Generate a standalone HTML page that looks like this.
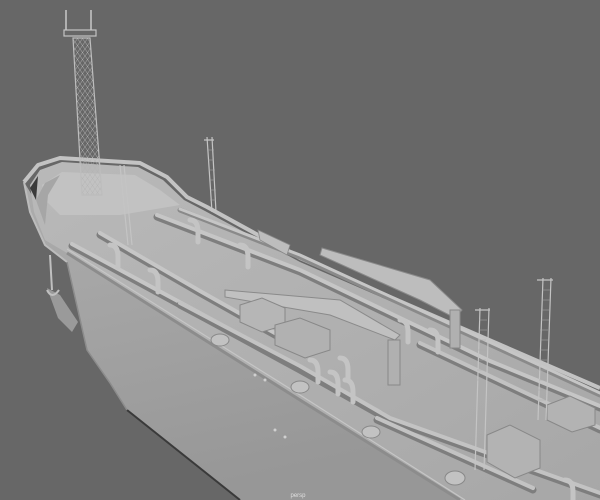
<!DOCTYPE html>
<html><head><style>
html,body{margin:0;padding:0;background:#676767;width:600px;height:500px;overflow:hidden}
svg{display:block}
</style></head><body>
<svg width="600" height="500" viewBox="0 0 600 500" xmlns="http://www.w3.org/2000/svg">
<defs>
<linearGradient id="hull" x1="0" y1="0" x2="0.3" y2="1">
<stop offset="0" stop-color="#adadad"/><stop offset="1" stop-color="#979797"/>
</linearGradient>
<linearGradient id="deck" x1="0" y1="0" x2="1" y2="1">
<stop offset="0" stop-color="#b9b9b9"/><stop offset="1" stop-color="#a7a7a7"/>
</linearGradient>
<pattern id="lat" width="5" height="7" patternUnits="userSpaceOnUse">
<path d="M0 0L5 7M5 0L0 7" stroke="#b4b4b4" stroke-width="0.5"/>
</pattern>
</defs>
<rect width="600" height="500" fill="#676767"/>
<!-- bulb -->
<path d="M47 288 L60 295 L78 322 L72 332 L58 318 Z" fill="#9a9a9a"/>
<!-- hull -->
<path d="M24 182 L30 212 L45 245 L67 262 L87 350 L110 383 L127 410 L240 500 L460 500 L300 400 L67 253 Z" fill="url(#hull)"/>
<path d="M24 182 L30 212 L45 245 L67 262" fill="none" stroke="#bcbcbc" stroke-width="2"/>
<path d="M127 410 L240 500" stroke="#3a3a3a" stroke-width="2"/>
<path d="M67 262 L87 350 L110 383 L127 410" stroke="#8c8c8c" stroke-width="1.5" fill="none"/>
<!-- deck -->
<path d="M30 185 L40 170 L62 162 L138 167 L163 180 L184 200 L205 211 L300 262 L600 392 L600 500 L460 500 L300 400 L67 253 L45 240 L34 212 Z" fill="url(#deck)"/>
<!-- bow inner area lighter -->
<path d="M42 185 L62 172 L135 175 L160 190 L180 205 L120 215 L60 215 L45 200 Z" fill="#c2c2c2"/>
<path d="M36 200 L45 183 L60 175 L48 195 L45 225 Z" fill="#a6a6a6"/>
<path d="M30 188 L38 176 L36 200 Z" fill="#3a3a3a"/>
<!-- rim -->
<path d="M24 182 L38 165 L60 158 L140 163 L167 177 L187 197 L207 207 L300 258 L600 388" fill="none" stroke="#c3c3c3" stroke-width="4" stroke-linejoin="round"/>
<path d="M67 253 L300 400 L460 500" stroke="#8c8c8c" stroke-width="3" fill="none"/>
<path d="M67 249 L300 395 L465 500" stroke="#c6c6c6" stroke-width="1.2" fill="none"/>
<!-- pipes -->
<g stroke-linecap="round" fill="none">
<path d="M72 246 L300 370 L380 415" stroke="#7e7e7e" stroke-width="7"/>
<path d="M72 244 L300 367 L380 412" stroke="#c6c6c6" stroke-width="4"/>
<path d="M100 235 L200 293 L305 352" stroke="#7e7e7e" stroke-width="7"/>
<path d="M100 233 L200 291 L305 350" stroke="#c6c6c6" stroke-width="4"/>
<path d="M180 305 L300 368 L390 420 L600 495" stroke="#7e7e7e" stroke-width="7"/>
<path d="M180 303 L300 366 L390 418 L600 493" stroke="#c3c3c3" stroke-width="4"/>
<path d="M377 420 L533 490" stroke="#7e7e7e" stroke-width="7"/>
<path d="M377 418 L533 488" stroke="#c3c3c3" stroke-width="4"/>
<path d="M157 217 L300 272 L490 363 L600 408" stroke="#7e7e7e" stroke-width="7"/>
<path d="M157 215 L300 270 L490 361 L600 406" stroke="#c6c6c6" stroke-width="4"/>
<path d="M180 210 L300 257 L600 395" stroke="#8a8a8a" stroke-width="5"/>
<path d="M180 209 L300 255 L600 393" stroke="#c6c6c6" stroke-width="3"/>
<path d="M420 345 L600 430" stroke="#7e7e7e" stroke-width="7"/>
<path d="M420 343 L600 428" stroke="#c2c2c2" stroke-width="4"/>
<path d="M110 245 q8 0 8 12 v10" stroke="#c4c4c4" stroke-width="5"/>
<path d="M150 270 q8 0 8 12 v10" stroke="#c4c4c4" stroke-width="5"/>
<path d="M190 220 q8 0 8 12 v10" stroke="#c4c4c4" stroke-width="5"/>
<path d="M240 245 q8 0 8 12 v10" stroke="#c4c4c4" stroke-width="5"/>
<path d="M310 360 q8 0 8 12 v10" stroke="#c4c4c4" stroke-width="5"/>
<path d="M330 372 q8 0 8 12 v10" stroke="#c4c4c4" stroke-width="5"/>
<path d="M340 358 q8 0 8 12 v10" stroke="#c4c4c4" stroke-width="5"/>
<path d="M345 380 q8 0 8 12 v10" stroke="#c4c4c4" stroke-width="5"/>
<path d="M400 320 q8 0 8 12 v10" stroke="#c4c4c4" stroke-width="5"/>
<path d="M430 330 q8 0 8 12 v10" stroke="#c4c4c4" stroke-width="5"/>
<path d="M565 480 q8 0 8 12 v10" stroke="#c4c4c4" stroke-width="5"/>
</g>
<!-- cranes -->
<path d="M322 248 L430 280 L462 310 L455 318 L420 300 L320 255 Z" fill="#bdbdbd" stroke="#8a8a8a" stroke-width="1"/>
<path d="M225 290 L340 300 L400 335 L395 340 L330 315 L225 297 Z" fill="#c0c0c0" stroke="#8a8a8a" stroke-width="1"/>
<rect x="450" y="310" width="10" height="38" fill="#b0b0b0" stroke="#888" stroke-width="1"/>
<rect x="388" y="340" width="12" height="45" fill="#b0b0b0" stroke="#888" stroke-width="1"/>
<path d="M258 230 L290 245 L287 255 L260 240 Z" fill="#bdbdbd" stroke="#888" stroke-width="0.8"/>
<!-- boxes -->
<path d="M240 305 L262 298 L285 308 L285 325 L262 332 L240 322 Z" fill="#b6b6b6" stroke="#888" stroke-width="1"/>
<path d="M275 325 L300 318 L330 330 L330 350 L305 358 L275 345 Z" fill="#b1b1b1" stroke="#888" stroke-width="1"/>
<path d="M487 435 L510 425 L540 440 L540 468 L515 478 L487 462 Z" fill="#b3b3b3" stroke="#888" stroke-width="1"/>
<path d="M547 405 L570 396 L595 408 L595 425 L572 432 L547 420 Z" fill="#b3b3b3" stroke="#888" stroke-width="1"/>
<!-- tanks -->
<ellipse cx="220" cy="340" rx="9" ry="6" fill="#c2c2c2" stroke="#888"/>
<ellipse cx="300" cy="387" rx="9" ry="6" fill="#c2c2c2" stroke="#888"/>
<ellipse cx="371" cy="432" rx="9" ry="6" fill="#c2c2c2" stroke="#888"/>
<ellipse cx="455" cy="478" rx="10" ry="7" fill="#c2c2c2" stroke="#888"/>
<!-- anchor chain -->
<path d="M50 255 L52 290 M47 290 q5 10 12 0" stroke="#c0c0c0" stroke-width="2" fill="none"/>
<g fill="#d0d0d0"><circle cx="275" cy="430" r="1.5"/><circle cx="285" cy="437" r="1.5"/><circle cx="255" cy="375" r="1.5"/><circle cx="265" cy="380" r="1.5"/></g>
<!-- main mast -->
<path d="M73 38 L82 195 L102 195 L90 38 Z" fill="url(#lat)" stroke="#bdbdbd" stroke-width="1.2"/>
<rect x="64" y="30" width="32" height="6" fill="none" stroke="#c4c4c4" stroke-width="1.2"/>
<path d="M66 10 V30 M91 10 V30" stroke="#c8c8c8" stroke-width="1.5"/>
<g stroke="#c4c4c4" fill="none" stroke-width="1.2">
<path d="M120 165 L128 245 M124 165 L132 245"/>
<path d="M207 137 L212 212 M212 137 L216 212 M204 140 h10"/>
<path d="M543 278 L538 420 M551 278 L546 420 M537 280 h16"/>
<path d="M480 308 L475 470 M489 308 L484 470 M475 310 h15"/>
</g>
<g stroke="#aaaaaa" stroke-width="0.6">
<path d="M542 290h8M542 300h8M541 310h8M541 320h8M540 330h8M540 340h8M540 350h8M539 360h8M539 370h8M539 380h8M538 390h8M538 400h8"/>
<path d="M208 150h6M208 160h6M209 170h6M209 180h6M210 190h6M210 200h6"/>
<path d="M479 320h8M479 330h8M478 340h8M478 350h8M478 360h8M477 370h8M477 380h8"/>
</g>
<text x="298" y="497" font-family="Liberation Sans, sans-serif" font-size="6" fill="#e0e0e0" text-anchor="middle">persp</text>
</svg>
</body></html>
